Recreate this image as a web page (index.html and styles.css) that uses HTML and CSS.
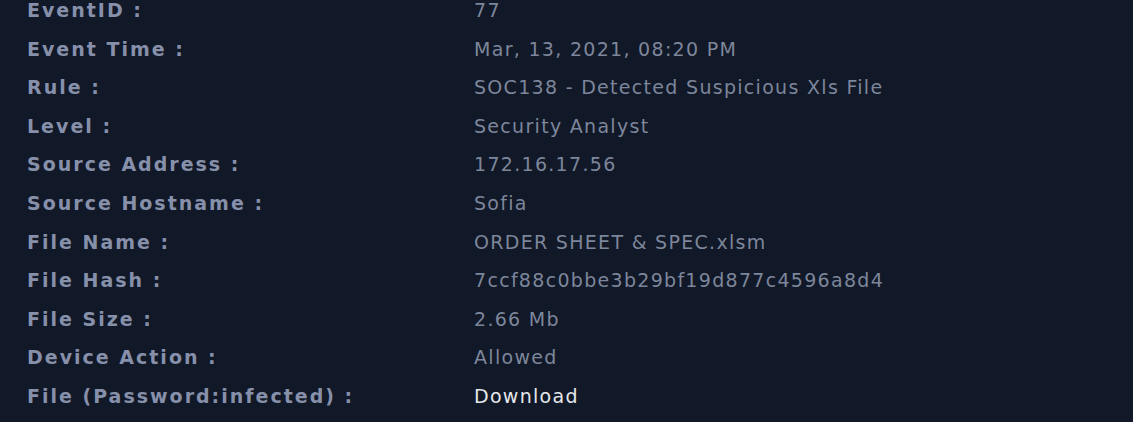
FILE: index.html
```html
<!DOCTYPE html>
<html lang="en">
<head>
<meta charset="utf-8">
<title>Event Details</title>
<link rel="stylesheet" href="styles.css">
</head>
<body>
<div class="details">
  <div class="label">EventID :</div><div class="value">77</div>
  <div class="label">Event Time :</div><div class="value">Mar, 13, 2021, 08:20 PM</div>
  <div class="label">Rule :</div><div class="value">SOC138 - Detected Suspicious Xls File</div>
  <div class="label">Level :</div><div class="value">Security Analyst</div>
  <div class="label">Source Address :</div><div class="value">172.16.17.56</div>
  <div class="label">Source Hostname :</div><div class="value">Sofia</div>
  <div class="label">File Name :</div><div class="value">ORDER SHEET &amp; SPEC.xlsm</div>
  <div class="label">File Hash :</div><div class="value">7ccf88c0bbe3b29bf19d877c4596a8d4</div>
  <div class="label">File Size :</div><div class="value">2.66 Mb</div>
  <div class="label">Device Action :</div><div class="value">Allowed</div>
  <div class="label">File (Password:infected) :</div><div class="value"><a class="link" href="#">Download</a></div>
</div>
</body>
</html>
```
FILE: styles.css
```css
html, body {
  margin: 0;
  padding: 0;
  background: #111827;
  height: 100%;
  overflow: hidden;
}
.details {
  display: grid;
  grid-template-columns: 447px 1fr;
  grid-auto-rows: 38.6px;
  margin-top: -8.9px;
  padding-left: 27px;
  font-family: "DejaVu Sans", sans-serif;
  font-size: 19px;
  line-height: 38.6px;
}
.label {
  color: #8790aa;
  font-weight: bold;
  letter-spacing: 2px;
  white-space: nowrap;
}
.value {
  color: #7d869b;
  letter-spacing: 1.3px;
  white-space: nowrap;
}
.link {
  color: #e5e7eb;
  text-decoration: none;
}
```
